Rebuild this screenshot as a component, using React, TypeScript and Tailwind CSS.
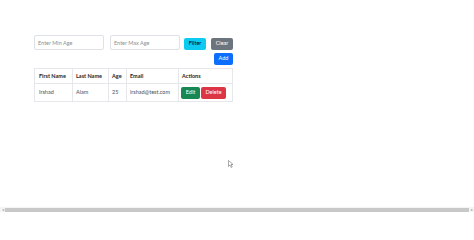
import React from "react";

const users = [
  { first: "Irshad", last: "Alam", age: 25, email: "irshad@test.com" },
];

const App = () => {
  return (
    <div className="relative w-[474px] h-[212px] overflow-hidden bg-white font-['Lato',sans-serif] text-[#212529]">
      <div className="h-[207px] pl-[34px] pt-[35px]">
        <div className="flex items-start w-[199px]">
          <input
            placeholder="Enter Min Age"
            className="w-[70px] h-[15px] border border-[#dee2e6] rounded-[2px] px-[3px] text-[5.5px] placeholder:text-[#8a9096] outline-none"
          />
          <input
            placeholder="Enter Max Age"
            className="ml-[6px] w-[70px] h-[15px] border border-[#dee2e6] rounded-[2px] px-[3px] text-[5.5px] placeholder:text-[#8a9096] outline-none"
          />
          <div className="ml-auto flex flex-col items-end mt-[3px]">
            <div className="flex gap-[5px]">
              <button className="w-[22px] h-[12px] rounded-[2px] bg-[#0dcaf0] text-black text-[5.5px] leading-none">
                Filter
              </button>
              <button className="w-[22px] h-[12px] rounded-[2px] bg-[#6c757d] text-white text-[5.5px] leading-none">
                Clear
              </button>
            </div>
            <button className="mt-[3px] w-[19px] h-[12px] rounded-[2px] bg-[#0d6efd] text-white text-[5.5px] leading-none">
              Add
            </button>
          </div>
        </div>

        <table className="mt-[3px] w-[199px] border-collapse text-[5.5px] text-left">
          <thead>
            <tr className="h-[15px]">
              <th className="w-[38px] border border-[#e5e7ea] pl-[4px] font-bold">First Name</th>
              <th className="w-[36px] border border-[#e5e7ea] pl-[3px] font-bold">Last Name</th>
              <th className="w-[18px] border border-[#e5e7ea] pl-[3px] font-bold">Age</th>
              <th className="w-[52px] border border-[#e5e7ea] pl-[3px] font-bold">Email</th>
              <th className="border border-[#e5e7ea] pl-[3px] font-bold">Actions</th>
            </tr>
          </thead>
          <tbody>
            {users.map((u) => (
              <tr key={u.email} className="h-[18px] text-[#4a4f55]">
                <td className="border border-[#e5e7ea] pl-[4px]">{u.first}</td>
                <td className="border border-[#e5e7ea] pl-[3px]">{u.last}</td>
                <td className="border border-[#e5e7ea] pl-[3px]">{u.age}</td>
                <td className="border border-[#e5e7ea] pl-[3px]">{u.email}</td>
                <td className="border border-[#e5e7ea] pl-[2px]">
                  <div className="flex gap-[1px]">
                    <button className="w-[19px] h-[12px] rounded-[2px] bg-[#198754] text-white leading-none">
                      Edit
                    </button>
                    <button className="w-[25px] h-[12px] rounded-[2px] bg-[#dc3545] text-white leading-none">
                      Delete
                    </button>
                  </div>
                </td>
              </tr>
            ))}
          </tbody>
        </table>
      </div>

      {/* horizontal scrollbar */}
      <div className="flex items-center h-[5px] bg-[#f4f4f4]">
        <span className="w-[5px] text-center text-[4px] leading-none text-[#a3a3a3]">◂</span>
        <div className="flex-1 h-[4px] bg-[#c8c8c8]" />
        <span className="w-[5px] text-center text-[4px] leading-none text-[#a3a3a3]">▸</span>
      </div>

      {/* mouse cursor */}
      <svg className="absolute left-[228px] top-[160px]" width="6" height="8" viewBox="0 0 12 16">
        <path d="M1 1 L1 13 L4 10 L6.5 15 L8.5 14 L6 9 L10 9 Z" fill="#fff" stroke="#555" strokeWidth="1" />
      </svg>
    </div>
  );
};

export default App;
